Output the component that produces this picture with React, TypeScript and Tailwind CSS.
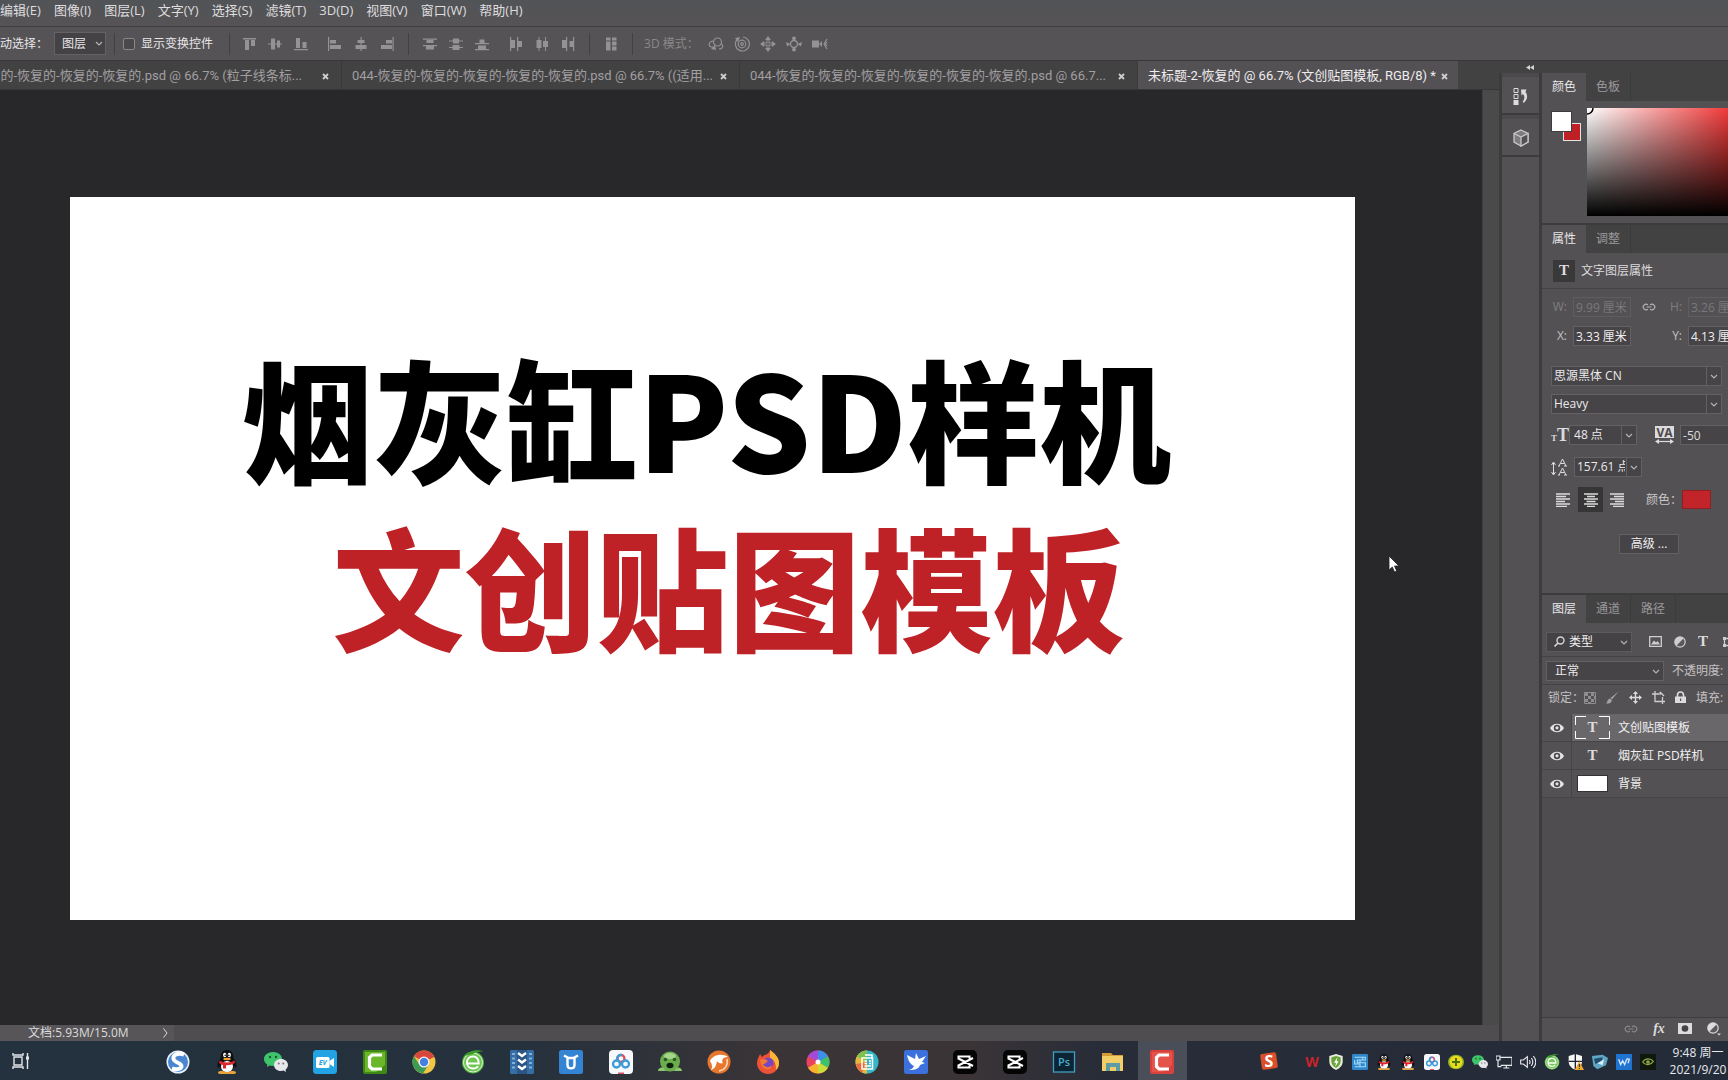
import { FC, ReactNode } from 'react';

const menus = ['编辑(E)', '图像(I)', '图层(L)', '文字(Y)', '选择(S)', '滤镜(T)', '3D(D)', '视图(V)', '窗口(W)', '帮助(H)'];

const docTabs = [
  { title: '复的-恢复的-恢复的-恢复的.psd @ 66.7% (粒子线条标...', cut: true },
  { title: '044-恢复的-恢复的-恢复的-恢复的-恢复的.psd @ 66.7% ((适用...', cut: false },
  { title: '044-恢复的-恢复的-恢复的-恢复的-恢复的-恢复的.psd @ 66.7...', cut: false },
];

const Chevron: FC<{ className?: string }> = ({ className = '' }) => (
  <svg viewBox="0 0 8 5" className={`w-2 h-[5px] pointer-events-none fill-none stroke-[#b5b3b5] ${className}`}>
    <path d="M1 1l3 3 3-3" strokeWidth="1.2" />
  </svg>
);

const Close: FC = () => (
  <svg viewBox="0 0 7 7" className="w-[7px] h-[7px] stroke-[#cfcdcf]">
    <path d="M1 1l5 5M6 1L1 6" strokeWidth="1.8" />
  </svg>
);

/* options bar */

const Tool: FC<{ label: string; children: ReactNode }> = ({ label, children }) => (
  <button aria-label={label} className="w-[26px] h-6 flex items-center justify-center">
    <svg viewBox="0 0 16 16" className="w-4 h-4 fill-[#949294] stroke-[#949294]" strokeWidth="0">{children}</svg>
  </button>
);

const Divider: FC = () => <span className="w-px h-[22px] bg-[#434143]" />;

const AlignTools: FC = () => (
  <>
    <div className="flex ml-1.5">
      <Tool label="顶对齐"><path d="M2 2h13v1.5H2zM4 4h4v10H4zM10 4h4v6h-4z" /></Tool>
      <Tool label="垂直居中对齐"><path d="M1 7.5h14v1H1zM4 2.5h4v11H4zM10 4.5h3v7h-3z" /></Tool>
      <Tool label="底对齐"><path d="M1 13h14v1.3H1zM3 2h4v10H3zM9.500 6h4v6h-4z" /></Tool>
    </div>
    <div className="flex ml-2">
      <Tool label="左对齐"><path d="M1 1h1.200v14H1zM3 4h6v3.500H3zM3 9h11v4H3z" /></Tool>
      <Tool label="水平居中对齐"><path d="M7.500 1h1.200v14H7.500zM4.500 4h7v3H4.500zM2.500 9h11v4h-11z" /></Tool>
      <Tool label="右对齐"><path d="M13.500 1h1.200v14h-1.200zM7 4h6v3.500H7zM2 9h11v4H2z" /></Tool>
    </div>
    <div className="ml-2 flex items-center"><Divider /></div>
    <div className="flex ml-2">
      <Tool label="按顶分布"><path d="M1 2.500h14v1.200H1zM4.500 4h7v3h-7zM1 9h14v1.200H1zM4 10h8v3.500H4z" /></Tool>
      <Tool label="垂直居中分布"><path d="M1 4.500h14v1H1zM5 2.500h6v5H5zM1 11h14v1H1zM4.500 9h7v5h-7z" /></Tool>
      <Tool label="按底分布"><path d="M1 7h14v1.200H1zM5.500 3.500h5V7h-5zM1 13h14v1.200H1zM4 9.500h8V13H4z" /></Tool>
    </div>
    <div className="flex ml-2">
      <Tool label="按左分布"><path d="M2 1h1.200v14H2zM3 4h4v8H3zM9 1h1.200v14H9zM10 5h4v6h-4z" /></Tool>
      <Tool label="水平居中分布"><path d="M4.500 1h1v14h-1zM2.500 4h5v8h-5zM11 1h1v14h-1zM9 5h5v6H9z" /></Tool>
      <Tool label="按右分布"><path d="M6 1h1.200v14H6zM2 4h4v8H2zM13 1h1.200v14H13zM9.500 5H13v6H9.500z" /></Tool>
    </div>
    <div className="ml-2 flex items-center"><Divider /></div>
    <div className="ml-2">
      <Tool label="自动对齐图层"><path d="M3 1.500h4.500v3H3zM3 5.500h4.500v9H3zM9 1.500h4.500v3H9zM9 5.500h4.500v4H9zM9 10.500h4.500v4H9z" /></Tool>
    </div>
    <div className="ml-2 flex items-center"><Divider /></div>
    <span className="ml-[11px] w-[59px] text-[#8a888a] whitespace-nowrap">3D 模式：</span>
    <div className="flex">
      <Tool label="旋转 3D 对象">
        <g fill="none" strokeWidth="1.200"><circle cx="9.500" cy="6" r="4" /><path d="M5 5C0 6 0 11 5 11M13 8c3 1 2 5-2 5" /></g>
        <path d="M3 13l4-4 1 5z" />
      </Tool>
      <Tool label="滚动 3D 对象">
        <g fill="none" strokeWidth="1.200"><path d="M3 3.500A7 7 0 1 0 9 1" /><circle cx="8" cy="8" r="3.800" /><circle cx="8" cy="8" r="1.300" /></g>
        <path d="M1 2l5-1-2 5z" />
      </Tool>
      <Tool label="拖动 3D 对象">
        <path d="M8 0l3 4H5zM8 16l3-4H5zM0 8l4-3v6zM16 8l-4-3v6z" />
        <path d="M8 3v10M3 8h10" strokeWidth="3" /><path d="M8 4v8M4 8h8" stroke="#555355" strokeWidth="1" />
      </Tool>
      <Tool label="滑动 3D 对象">
        <circle cx="8" cy="8" r="3.500" fill="none" strokeWidth="1.400" />
        <path d="M8 0l2.500 3h-5zM8 16l2.500-3h-5zM0 6l4.500 2L1 10.500zM16 6l-4.500 2 3.500 2.500z" />
        <path d="M6.500 1h3v3h-3zM6.500 12h3v3h-3z" />
      </Tool>
      <Tool label="缩放 3D 对象">
        <path d="M0 4.500h7v7H0zM7 8l3-3v6z" />
        <path d="M15 3l-3 5 3 5M15 6l-1.500 2L15 10" fill="none" strokeWidth="1.200" />
      </Tool>
    </div>
  </>
);

/* panels */

const PanelTabs: FC<{ tabs: string[] }> = ({ tabs }) => (
  <div role="tablist" className="flex h-7 bg-[#434243] shrink-0">
    {tabs.map((t, i) => (
      <button
        key={t}
        role="tab"
        aria-selected={i === 0}
        className={i === 0 ? 'w-11 bg-[#535153] text-[#e8e6e8]' : 'w-[45px] border-r border-[#3c3b3c] text-[#9a989a]'}
      >
        {t}
      </button>
    ))}
  </div>
);

const Field: FC<{ label: string; value: string; dim?: boolean; className?: string }> = ({ label, value, dim, className = '' }) => (
  <label className={`flex items-center shrink-0 ${dim ? 'text-[#807e80]' : 'text-[#c4c2c4]'} ${className}`}>
    <span className="w-[21px] text-right mr-1.5">{label}</span>
    <input
      defaultValue={value}
      disabled={dim}
      className={`w-[58px] h-5 px-0.5 border text-[12px] ${dim ? 'border-[#5f5d5f] bg-transparent text-[#7a787a]' : 'border-[#636163] bg-[#464446] text-[#f0eef0]'}`}
    />
  </label>
);

const Select: FC<{ label: string; value: string; className: string; split?: boolean }> = ({ label, value, className, split }) => (
  <div className={`relative h-5 shrink-0 ${className}`}>
    <select aria-label={label} className="appearance-none w-full h-full bg-[#464446] border border-[#636163] pl-0.5 pr-4 text-[#ebe9eb]">
      <option>{value}</option>
    </select>
    {split && <span className="absolute right-[15px] top-0 w-px h-full bg-[#636163]" />}
    <Chevron className="absolute right-1 top-2" />
  </div>
);

const TextLines: FC<{ d: string }> = ({ d }) => (
  <svg viewBox="0 0 14 14" className="w-3.5 h-3.5 stroke-[#dddbdd]"><path d={d} strokeWidth="1.300" /></svg>
);

const Serif: FC<{ className?: string }> = ({ className = '' }) => (
  <span className={`font-['Liberation_Serif',serif] font-bold leading-none text-[#dddbdd] ${className}`}>T</span>
);

const Eye: FC = () => (
  <svg viewBox="0 0 14 10" className="w-3.5 h-2.5">
    <path d="M0 5C3-.8 11-.8 14 5 11 10.800 3 10.800 0 5z" fill="#e4e2e4" />
    <circle cx="7" cy="5" r="3.200" fill="#4a484a" /><circle cx="7" cy="4.800" r="1.600" fill="#e4e2e4" />
  </svg>
);

const Chain: FC<{ className?: string }> = ({ className = '' }) => (
  <svg viewBox="0 0 14 8" className={`w-3.5 h-2 fill-none ${className}`}>
    <path d="M6 6.200A3 2.700 0 1 1 6 1.800M8 6.200A3 2.700 0 1 0 8 1.800M4.500 4h5" strokeWidth="1.200" />
  </svg>
);

const ColorPanel: FC = () => (
  <section aria-label="颜色">
    <PanelTabs tabs={['颜色', '色板']} />
    <div className="flex h-[122px] pt-[7px] bg-[#535153]">
      <div className="w-[45px] pl-[9px] pt-[3px]">
        <div className="relative w-[30px] h-[30px]">
          <span className="absolute right-0 bottom-0 w-[18px] h-[18px] border border-[#e5e5e5] bg-[#be2026]" />
          <span className="absolute left-0 top-0 w-[21px] h-[21px] border border-[#3d3d3d] bg-white" />
        </div>
      </div>
      <div className="flex-1 h-[108px] bg-[linear-gradient(to_top,#000,transparent),linear-gradient(to_right,#fff,#f23a3a)]">
        <svg viewBox="0 0 8 8" className="w-2 h-2 fill-none stroke-black"><path d="M6 0A6 6 0 0 1 0 6" strokeWidth="1.500" /></svg>
      </div>
    </div>
  </section>
);

const PropertiesPanel: FC = () => (
  <section aria-label="属性" className="border-t-2 border-[#3d3c3d] bg-[#535153]">
    <PanelTabs tabs={['属性', '调整']} />
    <div className="flex items-center h-9 pl-[11px] border-b border-[#434243]">
      <span className="w-[22px] h-[22px] flex items-center justify-center bg-[#3a393a]"><Serif className="text-[15px]" /></span>
      <h2 className="ml-1.5 text-[#dddbdd]">文字图层属性</h2>
    </div>
    <div className="pt-2 h-[304px] pl-[9px]">
      <div className="flex items-center -ml-[5px]">
        <Field label="W:" value="9.99 厘米" dim />
        <Chain className="ml-[11px] mr-3 shrink-0 stroke-[#b5b3b5]" />
        <Field label="H:" value="3.26 厘米" dim className="-ml-[7px]" />
      </div>
      <div className="flex items-center -ml-[5px] mt-[9px]">
        <Field label="X:" value="3.33 厘米" />
        <Field label="Y:" value="4.13 厘米" className="ml-[30px]" />
      </div>
      <Select label="字体" value="思源黑体 CN" split className="mt-5 w-[171px]" />
      <Select label="字重" value="Heavy" split className="mt-2 w-[171px]" />
      <div className="flex items-center mt-[11px]">
        <span className="w-[23px] flex items-baseline"><Serif className="text-[9px]" /><Serif className="text-[18px]" /></span>
        <Select label="字号" value="48 点" split className="w-[68px] [&>select]:pl-1" />
        <svg viewBox="0 0 19 18" className="w-[19px] h-[18px] ml-[18px] mr-1.5 shrink-0">
          <path d="M0 0h19v12H0z" fill="#dddbdd" />
          <text x="9.500" y="10.500" textAnchor="middle" fontSize="12" fontWeight="bold" fontFamily="Open Sans, sans-serif" fill="#4a484a">VA</text>
          <path d="M2 15.500h15" stroke="#dddbdd" strokeWidth="1.200" /><path d="M0 15.500l4-2.500v5zM19 15.500L15 13v5z" fill="#dddbdd" />
        </svg>
        <input aria-label="字距" defaultValue="-50" className="w-14 h-5 px-0.5 shrink-0 border border-[#636163] bg-[#464446] text-[#dddbdd]" />
      </div>
      <div className="flex items-center mt-3">
        <svg viewBox="0 0 17 18" className="w-[17px] h-[18px] mr-1.5 fill-none stroke-[#dddbdd]">
          <path d="M2.500 5v11M.5 7l2-3 2 3M.5 14l2 3 2-3" />
          <path d="M7 8h2M13 8h3M8 8l3.500-7L15 8M9.500 5.500h4M7 17h2M13 17h3M8 17l3.500-7 3.500 7M9.500 14.500h4" />
        </svg>
        <Select label="行距" value="157.61 点" split className="w-[68px]" />
      </div>
      <div className="flex items-center mt-2.5 text-[#c9c7c9]">
        <button aria-label="左对齐文本" className="w-[27px] h-[25px] flex items-center pl-[5px]">
          <TextLines d="M0 1h14M0 3.500h10M0 6h14M0 8.500h9M0 11h14M0 13.500h11" />
        </button>
        <button aria-label="居中对齐文本" className="w-[25px] h-[25px] flex items-center justify-center bg-[#373637]">
          <TextLines d="M0 1h14M3 3.500h8M0 6h14M2.500 8.500h9M0 11h14M3 13.500h8" />
        </button>
        <button aria-label="右对齐文本" className="w-[27px] h-[25px] flex items-center justify-center">
          <TextLines d="M0 1h14M4 3.500h10M0 6h14M5 8.500h9M0 11h14M3 13.500h11" />
        </button>
        <span className="ml-4 w-9 whitespace-nowrap">颜色：</span>
        <button aria-label="文本颜色" className="w-[29px] h-[19px] bg-[#c12529] border border-[#8e2023]" />
      </div>
      <button className="block ml-[68px] mt-[22px] w-[60px] h-5 border border-[#636163] bg-[#464446] text-[#f0eef0]">高级 ...</button>
    </div>
  </section>
);

const LayerRow: FC<{ name: string; selected?: boolean; thumb: ReactNode }> = ({ name, selected, thumb }) => (
  <li className="flex h-7 border-b border-[#464546]">
    <button aria-label="显示图层" className="w-[30px] flex items-center justify-center border-r border-[#464546]"><Eye /></button>
    <div className={`flex-1 flex items-center pl-[3px] whitespace-nowrap text-[#f2f0f2] ${selected ? 'bg-[#696769]' : ''}`}>
      <span className="w-[35px] h-[23px] mr-2 flex items-center justify-center">{thumb}</span>
      {name}
    </div>
  </li>
);

const LayersPanel: FC = () => (
  <section aria-label="图层" className="flex-1 flex flex-col border-t-2 border-[#3d3c3d] bg-[#535153]">
    <PanelTabs tabs={['图层', '通道', '路径']} />
    <div className="flex items-center h-[34px] pt-1 pl-1 border-b border-[#454345]">
      <div className="relative w-[86px] h-5 shrink-0">
        <select aria-label="筛选类型" className="appearance-none w-full h-full bg-[#444244] border border-[#5c5a5c] pl-[22px] text-[#f0eef0]"><option>类型</option></select>
        <svg viewBox="0 0 11 11" className="absolute left-2 top-1 w-[11px] h-[11px] fill-none stroke-[#d5d3d5]"><circle cx="6.500" cy="4.500" r="3.500" strokeWidth="1.400" /><path d="M4 7L.5 10.500" strokeWidth="1.600" /></svg>
        <Chevron className="absolute right-1 top-2" />
      </div>
      <div className="flex items-center gap-3 ml-[17px] shrink-0">
        <svg viewBox="0 0 13 11" className="w-[13px] h-[11px]"><path d="M.7.700h11.600v9.600H.7z" fill="none" stroke="#cfcdcf" strokeWidth="1.300" /><path d="M2 8.500l3-4 2 2 1.500-1.500L11 8.500z" fill="#cfcdcf" /></svg>
        <svg viewBox="0 0 12 12" className="w-3 h-3"><circle cx="6" cy="6" r="5.200" fill="#5b595b" stroke="#cfcdcf" strokeWidth="1.200" /><path d="M9.700 2.300A5.200 5.200 0 0 0 2.300 9.700z" fill="#cfcdcf" /></svg>
        <Serif className="w-3 text-[15px]" />
        <svg viewBox="0 0 12 12" className="w-3 h-3 fill-none stroke-[#cfcdcf]"><path d="M2.500 2v8M3 2.500h8M3 9.500h8" strokeWidth="1.300" /><path d="M1 1h3v3H1zM1 8h3v3H1z" fill="#cfcdcf" strokeWidth="0" /></svg>
      </div>
    </div>
    <div className="flex items-center h-7 pl-1 border-b border-[#454345] text-[#c4c2c4]">
      <Select label="混合模式" value="正常" className="w-[118px] [&>select]:pl-2" />
      <span className="ml-2 whitespace-nowrap">不透明度:</span>
    </div>
    <div className="flex items-center h-[29px] pb-1 pl-1.5 text-[#c4c2c4] whitespace-nowrap">
      <span className="w-9">锁定：</span>
      <div className="flex items-center gap-[10px]">
        <svg viewBox="0 0 12 12" className="w-3 h-3"><path d="M.5.500h11v11H.5z" fill="none" stroke="#8f8d8f" /><path d="M1 1h3v3H1zM7 1h3v3H7zM4 4h3v3H4zM1 7h3v3H1zM7 7h3v3H7zM10 4h1v3h-1zM4 10h3v1H4z" fill="#8f8d8f" /></svg>
        <svg viewBox="0 0 13 13" className="w-[13px] h-[13px] fill-[#a3a1a3]"><path d="M12.500.5L6 8.500 4.500 7zM4 7.500L6 9.500C5 13 2 12.500 0 12.500c1.500-1 1-4 4-5z" /></svg>
        <svg viewBox="0 0 13 13" className="w-[13px] h-[13px] fill-[#dddbdd] stroke-[#dddbdd]"><path d="M6.500 2v9M2 6.500h9" strokeWidth="1.400" /><path d="M6.500 0L9 3H4zM6.500 13L9 10H4zM0 6.500L3 4v5zM13 6.500L10 4v5z" strokeWidth="0" /></svg>
        <svg viewBox="0 0 13 13" className="w-[13px] h-[13px] fill-none stroke-[#cfcdcf]"><path d="M3 0v10.500h10M0 3h7M10.500 13V6M8 1l4 4M8 4V1" strokeWidth="1.300" /></svg>
        <svg viewBox="0 0 11 13" className="w-[11px] h-[13px]"><path d="M2.500 6V4a3 3 0 0 1 6 0v2" fill="none" stroke="#dddbdd" strokeWidth="1.600" /><path d="M0 5.500h11V12H0z" fill="#dddbdd" /><path d="M5 7.500h1.200v2.500H5z" fill="#535153" /></svg>
        <span>填充:</span>
      </div>
    </div>
    <ul>
      <LayerRow
        name="文创贴图模板"
        selected
        thumb={
          <span className="relative w-full h-full flex items-center justify-center">
            <svg viewBox="0 0 35 23" className="absolute inset-0 w-[35px] h-[23px] fill-none stroke-white"><path d="M.5 9V.5H11M24 .5h10.500V9M.5 15v7.500H11M24 22.500h10.500V15" /></svg>
            <Serif className="text-[15px]" />
          </span>
        }
      />
      <LayerRow name="烟灰缸 PSD样机" thumb={<Serif className="text-[15px]" />} />
      <LayerRow name="背景" thumb={<span className="w-[31px] h-[17px] bg-white border border-[#333]" />} />
    </ul>
    <div className="flex-1 bg-[#4f4d4f]" />
    <div className="flex items-center h-6 border-t border-[#3f3e3f] pb-0.5 pl-[82px] text-[#dddbdd]">
      <Chain className="stroke-[#8a888a] shrink-0" />
      <button className="ml-3 w-[18px] font-['Liberation_Serif',serif] italic font-bold text-[14px] leading-none">fx</button>
      <svg viewBox="0 0 14 11" className="w-3.5 h-[11px] ml-2.5 shrink-0"><path d="M0 0h14v11H0z" fill="#dddbdd" /><circle cx="7" cy="5.500" r="3.300" fill="#454345" /></svg>
      <svg viewBox="0 0 14 14" className="w-3.5 h-3.5 ml-[15px] shrink-0"><circle cx="6" cy="6" r="5.200" fill="#5b595b" stroke="#dddbdd" strokeWidth="1.200" /><path d="M9.700 2.300A5.200 5.200 0 0 0 2.300 9.700z" fill="#dddbdd" /><path d="M10 11.500h4l-2 2z" fill="#dddbdd" /></svg>
    </div>
  </section>
);

/* taskbar */

const Qq: FC = () => (
  <>
    <ellipse cx="8" cy="22.500" rx="5" ry="1.800" fill="#e8a33a" /><ellipse cx="16" cy="22.500" rx="5" ry="1.800" fill="#e8a33a" />
    <path d="M12 0C7.500 0 5.500 3.500 5.500 8 3.500 11 2 14 2.500 17c.5 1.500 1.500 0 2.300-1 1 8 13.400 8 14.400 0 .8 1 1.800 2.500 2.300 1 .5-3-1-6-3-9C18.500 3.500 16.500 0 12 0z" fill="#101014" />
    <ellipse cx="12" cy="16.500" rx="6" ry="5.500" fill="#fff" />
    <path d="M4.500 10.500c4 2.500 11 2.500 15 0l.5 2.500c-3 2-6 2.300-9 2.200v3.300H8v-3.600c-1.500-.4-3-1-4-1.900z" fill="#d8262c" />
    <ellipse cx="9.700" cy="5" rx="1.600" ry="2.300" fill="#fff" /><ellipse cx="14.300" cy="5" rx="1.600" ry="2.300" fill="#fff" />
    <circle cx="10.200" cy="5.300" r=".8" /><circle cx="13.800" cy="5.300" r=".8" />
    <ellipse cx="12" cy="9" rx="3.800" ry="1.200" fill="#f0a22e" />
  </>
);

const WeChat: FC = () => (
  <>
    <path d="M9 2C4 2 0 5 0 9c0 2.300 1.300 4.300 3.300 5.500L2.800 17l2.900-1.500c1 .3 2.200.5 3.300.5 5 0 9-3 9-7s-4-7-9-7z" fill="#3ec46a" />
    <circle cx="6" cy="7" r="1.200" fill="#1d5a34" /><circle cx="12" cy="7" r="1.200" fill="#1d5a34" />
    <path d="M17 9c-4 0-7 2.600-7 6s3 6 7 6c.9 0 1.700-.1 2.500-.4L22 22l-.5-2.300C23 18.500 24 16.900 24 15c0-3.400-3-6-7-6z" fill="#e6e7ea" />
    <circle cx="14.700" cy="13.500" r="1" fill="#777" /><circle cx="19.300" cy="13.500" r="1" fill="#777" />
  </>
);

const Netdisk: FC = () => (
  <>
    <rect width="24" height="24" rx="4" fill="#f6f8fb" />
    <g fill="none" strokeWidth="2.300"><circle cx="12" cy="8.500" r="3.500" stroke="#d65163" /><circle cx="7.500" cy="14" r="3.500" stroke="#3d9bd8" /><circle cx="16.500" cy="14" r="3.500" stroke="#3d9bd8" /><path d="M9 10.500a3.500 3.500 0 0 1 4-5.400" stroke="#3d9bd8" /></g>
    <path d="M9 22.500h6V24H9z" fill="#d65163" />
  </>
);

const GreenE: FC = () => (
  <>
    <circle cx="12" cy="12.500" r="11" fill="#4fae3a" /><circle cx="12" cy="12.500" r="9.500" fill="#6fc653" stroke="#e4f5de" strokeWidth="1" />
    <path d="M6.500 13.500h11.200C18 9 15.500 6.500 12 6.500c-3.500 0-6 2.500-6 6s2.500 6 6 6c2.300 0 4-.8 5-2.300" fill="none" stroke="#fff" strokeWidth="2" />
    <path d="M3 6C8 0 19-1 23 2c-3-1-8 0-11 2z" fill="#3c9a2d" />
  </>
);

const CapCut: FC = () => (
  <>
    <rect width="24" height="24" rx="5" fill="#050505" />
    <path d="M20 8L5.500 15.500v2H16.500v-2M20 16L5.500 8.500v-2H16.500v2" fill="none" stroke="#fff" strokeWidth="2.100" />
  </>
);

const Camtasia: FC<{ fill: string; edge: string }> = ({ fill, edge }) => (
  <>
    <rect width="24" height="24" rx="2" fill={edge} /><path d="M2 2h20v13L13 22H2z" fill={fill} />
    <path d="M19 5H9L6.500 7.500v9L9 19h10" fill="none" stroke="#fff" strokeWidth="3.200" />
  </>
);

const apps: { name: string; art: ReactNode }[] = [
  { name: '搜狗浏览器', art: <><circle cx="12" cy="12" r="11.500" fill="#e9f1fb" /><circle cx="12" cy="12" r="10" fill="#4a86d0" /><path d="M18 4.500C11 2 5.500 6 8 10c2 3 8 3 7.500 6.500-.4 2.500-5 3.500-9.500 2" fill="none" stroke="#fff" strokeWidth="4" /></> },
  { name: 'QQ', art: <Qq /> },
  { name: '微信', art: <WeChat /> },
  { name: 'EV录屏', art: <><rect width="24" height="24" rx="3.500" fill="#22a4e4" /><rect x="3" y="7" width="13.500" height="11" rx="1.500" fill="#fff" /><path d="M16.500 11l4.500-3v9l-4.500-3z" fill="#fff" /><text x="9.700" y="15" fontSize="7" fontWeight="bold" fontStyle="italic" textAnchor="middle" fontFamily="Open Sans, sans-serif" fill="#22a4e4">EV</text></> },
  { name: 'Camtasia', art: <Camtasia fill="#6ab82a" edge="#3f8a17" /> },
  { name: 'Chrome', art: <><circle cx="12" cy="12" r="11.500" fill="#f3c544" /><path d="M12 12L2 6.200A11.500 11.500 0 0 1 22 6.200L22 7z" fill="#d9473b" /><path d="M2 6.200A11.500 11.500 0 0 0 11 23.500L17 14 7 14z" fill="#3f9b54" /><circle cx="12" cy="12" r="5.500" fill="#f4f4f4" /><circle cx="12" cy="12" r="4.200" fill="#4580e0" /></> },
  { name: '360浏览器', art: <GreenE /> },
  { name: '下载', art: <><rect width="24" height="24" rx="1.500" fill="#356ea6" /><path d="M7 0h10v24H7z" fill="#2b5585" /><path d="M2 4h3M2 8.500h3M2 13h3M2 17.500h3M19 4h3M19 8.500h3M19 13h3M19 17.500h3" stroke="#7fb0dc" strokeWidth="1.800" /><path d="M8 3l4 3 4-3M8 9.500l4 3 4-3M8 16l4 3 4-3" fill="none" stroke="#fff" strokeWidth="2.400" /></> },
  { name: '优图', art: <><rect width="24" height="24" rx="2.500" fill="#3385d4" /><path d="M5 5.500l3.500 2v7.500c0 4.500 7 4.500 7 0V7.500l3.500-2M8.500 8h7" fill="none" stroke="#fff" strokeWidth="2.400" /></> },
  { name: '百度网盘', art: <Netdisk /> },
  { name: '青蛙', art: <><circle cx="12" cy="11.500" r="10" fill="#6cae4e" /><ellipse cx="12" cy="6" rx="6" ry="3" fill="#a5d48b" /><path d="M0 21c0-4 6-5 7-1l2 1H1zM24 21c0-4-6-5-7-1l-2 1h8z" fill="#8cc66f" /><circle cx="7.500" cy="9.500" r="1.800" fill="#2b5c22" /><circle cx="16.500" cy="9.500" r="1.800" fill="#2b5c22" /><ellipse cx="12" cy="15.500" rx="3.500" ry="2.800" fill="#0e200b" /></> },
  { name: 'UC浏览器', art: <><circle cx="12" cy="12" r="11.500" fill="#e8762d" /><path d="M3 11C6 4 16 3 21 7c-5 0-7 3-5 6-2 1-5 0-6-2-1 6-3 8-6 9 2-3 1-6-1-9z" fill="#fff" /><path d="M20 9c1.500 6-2 11-8 12" fill="none" stroke="#ffd7b5" strokeWidth="1.500" /></> },
  { name: 'Firefox', art: <><path d="M14 0c4 3 9 7 9 13a11 11 0 0 1-22 0c0-4 2-6 3-9 1 1 1 2 2 3 3-3 7-2 8-7z" fill="#ee5236" /><path d="M14 0c4 3 9 7 9 13 0 3-1 5-3 7 0-6-1-10-6-12z" fill="#f9b73a" /><circle cx="12" cy="13" r="5.500" fill="#7646c4" /><path d="M4 10c3-2 6-1 8 1-2 1-2 3-5 3 2 4 7 4 9 1 0 6-10 7-12-5z" fill="#f2792f" /></> },
  { name: '看图', art: <><circle cx="12" cy="12" r="11.500" fill="#e9435e" /><path d="M12 12L12 .5A11.500 11.500 0 0 1 22 6.300z" fill="#3b8fe8" /><path d="M12 12L22 6.300A11.500 11.500 0 0 1 22 17.800z" fill="#39c46c" /><path d="M12 12L22 17.800A11.500 11.500 0 0 1 12 23.500z" fill="#c9de38" /><path d="M12 12v11.500A11.500 11.500 0 0 1 2 17.800z" fill="#f7b22e" /><path d="M12 12L2 6.300A11.500 11.500 0 0 1 12 .5z" fill="#a44ad8" /><circle cx="12" cy="12" r="2.500" fill="#fff" /></> },
  { name: '文件管理', art: <><circle cx="12" cy="12" r="11.500" fill="#34b6c9" /><path d="M12 .5A11.500 11.500 0 0 0 12 23.500z" fill="#e9b63c" /><path d="M2 6.500A11.500 11.500 0 0 1 12 .5v11.500z" fill="#7cc24c" /><path d="M1 14a11.500 11.500 0 0 0 6 8.500L12 12z" fill="#ec6b3d" /><path d="M7 8h10.500v11H7zM10 5h7v3M9.500 11h2.500M14 11h2M9.500 13.500h2.500M14 13.500h2M9.500 16h6.500" fill="none" stroke="#fff" strokeWidth="1.500" /></> },
  { name: '迅雷', art: <><rect width="24" height="24" rx="2.500" fill="#3c70dd" /><path d="M3 5l8 4 1-6 3 6 7-3-4 6 3 1-5 2c-1 4-5 5-11 5 3-1 4-2 5-4-4-2-6-6-7-11z" fill="#fff" /></> },
  { name: '剪映', art: <CapCut /> },
  { name: '剪映专业版', art: <CapCut /> },
  { name: 'Photoshop', art: <><rect x="1.500" y="2" width="21" height="20" fill="#0c2433" stroke="#3f9fc4" strokeWidth="1.300" /><text x="12" y="16" fontSize="11" fontWeight="600" textAnchor="middle" fontFamily="Open Sans, sans-serif" fill="#49add2">Ps</text></> },
  { name: '文件资源管理器', art: <><path d="M1 3h9l2 2h10v4H1z" fill="#d59b35" /><path d="M1 6h21v15H1z" fill="#f3ce66" /><path d="M5 13h14v8h-4v-4H9v4H5z" fill="#5d9ba5" /></> },
  { name: 'Camtasia 录制', art: <Camtasia fill="#e5524a" edge="#d8403c" /> },
];

const tray: { name: string; art: ReactNode }[] = [
  { name: 'WPS', art: <text x="12" y="20" fontSize="21" fontWeight="bold" textAnchor="middle" fontFamily="Open Sans, sans-serif" fill="#c8242b">W</text> },
  { name: '安全卫士', art: <><path d="M12 0l10 3v8c0 7-5 11-10 13C7 22 2 18 2 11V3z" fill="#e9efdc" /><path d="M12 3l7 2v6c0 5-3 8-7 10-4-2-7-5-7-10V5z" fill="#69a33a" /><path d="M14 5l-5 8h3l-1 6 5-8h-3z" fill="#fff" /></> },
  { name: '显卡设置', art: <><rect width="24" height="24" rx="2" fill="#2f88c9" /><path d="M4 5h16v4H8v4h12v6H4M12 9v4M4 9v6h8v4M16 5v4" fill="none" stroke="#a9dcf7" strokeWidth="1.600" /></> },
  { name: 'QQ 1', art: <Qq /> },
  { name: 'QQ 2', art: <Qq /> },
  { name: '网盘', art: <Netdisk /> },
  { name: '加速球', art: <><ellipse cx="12" cy="12" rx="12" ry="11" fill="#8db823" /><circle cx="12" cy="12" r="9.500" fill="#f0d91d" /><path d="M12 6v12M6 12h12" stroke="#46750f" strokeWidth="3" /></> },
  { name: '微信', art: <WeChat /> },
  { name: '网络', art: <path d="M7 5h17v12H7M11 21h9M15.500 17v4M0 3h6v6H0zM3 9v10h5" fill="none" stroke="#e7e9ec" strokeWidth="1.800" /> },
  { name: '音量', art: <path d="M1 9v6h4l6 5V4L5 9zM14 9c1.500 2 1.500 4 0 6M17 6c3 4 3 8 0 12M20 3c5 6 5 12 0 18" fill="none" stroke="#e7e9ec" strokeWidth="1.700" /> },
  { name: '浏览器', art: <GreenE /> },
  { name: '安全中心', art: <><path d="M11 0l10 3v8c0 7-5 11-10 13C6 22 1 18 1 11V3z" fill="#f7f7f7" /><path d="M11 0v24M1 11h20" stroke="#20242e" strokeWidth="2" /><path d="M17 11l7 13H10z" fill="#f0a92e" /><path d="M17 15v4.500M17 21v1.500" stroke="#222" strokeWidth="1.600" /></> },
  { name: '硬件管理', art: <><path d="M0 3l16-2 8 5-3 11-13 6-6-5z" fill="#5fa6c4" /><path d="M3 7l13-2-1 6-10 4z" fill="#1f4f6c" /><path d="M8 14l10-6-2 9z" fill="#d7eef7" /></> },
  { name: 'WiFi', art: <><rect width="24" height="24" fill="#1f74d0" /><path d="M4 8l3 8 3-6 3 6 3-8M16 7l4 1-2 6" fill="none" stroke="#d3e8ff" strokeWidth="2" /></> },
  { name: 'NVIDIA', art: <><rect width="24" height="24" fill="#10180b" /><path d="M4 12c4-6 12-6 16-1-4 6-12 7-16 1z" fill="none" stroke="#8aa84a" strokeWidth="1.800" /><circle cx="12" cy="12" r="2.800" fill="#8aa84a" /></> },
];

const Taskbar: FC = () => (
  <footer className="flex h-[39px] shrink-0 overflow-hidden bg-[linear-gradient(to_right,#23323e_0%,#25313d_30%,#3a3437_45%,#3a3437_56%,#272c38_64%,#242c39_100%)]">
    <button aria-label="任务视图" className="w-[153px] pl-3">
      <svg viewBox="0 0 18 16" className="w-[18px] h-4 fill-none stroke-[#e3e6e9]"><path d="M1 0v2h10V0M2 4h8v8H2zM1 16v-2h10v2M15.500 0v16" strokeWidth="1.400" /><path d="M14 3.500h3v3h-3z" fill="#e3e6e9" strokeWidth="0" /></svg>
    </button>
    <nav aria-label="任务栏" className="flex w-[1034px]">
      {apps.map((a, i) => (
        <button key={a.name} aria-label={a.name} className={`flex-1 flex items-center justify-center pt-0.5 ${i === apps.length - 1 ? 'bg-[#4a4e58]' : ''}`}>
          <svg viewBox="0 0 24 24" className="w-6 h-6">{a.art}</svg>
        </button>
      ))}
    </nav>
    <div className="flex ml-auto items-center">
      <button aria-label="搜狗输入法" className="mr-[22px]">
        <svg viewBox="0 0 18 18" className="w-[18px] h-[18px]"><rect x="1" y="1" width="16" height="16" rx="2" fill="#d9502b" transform="rotate(-8 9 9)" /><text x="9" y="15" fontSize="16" fontWeight="bold" textAnchor="middle" fontFamily="Open Sans, sans-serif" fill="#fff">S</text></svg>
      </button>
      {tray.map((t) => (
        <button key={t.name} aria-label={t.name} className="w-6 h-full flex items-center justify-center pt-0.5">
          <svg viewBox="0 0 24 24" className="w-4 h-4">{t.art}</svg>
        </button>
      ))}
      <time className="ml-2 w-[60px] text-center text-[12px] leading-[17px] text-[#e6e9ed] whitespace-nowrap pt-px">9:48 周一<br />2021/9/20</time>
    </div>
  </footer>
);

const App: FC = () => {
  return (
    <div className="flex flex-col h-screen overflow-hidden bg-[#535153] text-[12px] font-['Open_Sans','Noto_Sans_CJK_SC',sans-serif]">
      <header className="shrink-0">
        <nav className="flex items-center h-[26px] gap-[13px] pb-[5px] bg-linear-to-b from-[#515457] to-[#565355] text-[13px] text-[#dfdddf]">
          {menus.map((m) => (
            <button key={m} className="whitespace-nowrap">{m}</button>
          ))}
        </nav>
        <div className="flex items-center h-[34px] border-t border-[#3f3d3f] bg-[#555355] text-[#e8e6e8]">
          <label htmlFor="auto-select" className="w-[54px] shrink-0 whitespace-nowrap">动选择：</label>
          <div className="relative w-[52px] h-[23px] shrink-0">
            <select id="auto-select" className="appearance-none w-full h-full pl-[7px] bg-[#444244] border border-[#636163]"><option>图层</option></select>
            <Chevron className="absolute right-[3px] top-[9px]" />
          </div>
          <div className="mx-2 flex items-center"><Divider /></div>
          <label className="flex items-center mr-4 whitespace-nowrap">
            <input type="checkbox" className="appearance-none w-3 h-3 mr-1.5 rounded-xs border border-[#8a888a] bg-[#4a484a]" />
            显示变换控件
          </label>
          <Divider />
          <AlignTools />
        </div>
      </header>

      <div className="flex flex-1 min-h-0">
        <main className="flex flex-col flex-1 min-w-0">
          <div role="tablist" className="flex h-[30px] shrink-0 border-y border-[#383738] bg-[#434243] font-['Roboto','Noto_Sans_CJK_SC',sans-serif] text-[13px] text-[#a19fa1]">
            {docTabs.map((t) => (
              <div key={t.title} className={`flex items-center shrink-0 pt-0.5 pr-3 border-r border-[#3a393a] ${t.cut ? 'w-[342px] justify-end gap-5' : 'w-[398px] pl-2.5 justify-between'}`}>
                <button role="tab" className="whitespace-nowrap">{t.title}</button>
                <button aria-label="关闭"><Close /></button>
              </div>
            ))}
            <div className="flex items-center justify-between w-[320px] shrink-0 pt-0.5 px-2.5 bg-[#535153] text-[#efedef]">
              <button role="tab" aria-selected="true" className="whitespace-nowrap">未标题-2-恢复的 @ 66.7% (文创贴图模板, RGB/8) *</button>
              <button aria-label="关闭"><Close /></button>
            </div>
          </div>
          <div className="flex flex-1 min-h-0">
            <div className="relative flex-1 bg-[#28282a]">
              <article className="mt-[107px] ml-[70px] mr-[127px] aspect-video bg-white pt-[135px] text-center font-['Noto_Sans_CJK_SC',sans-serif] font-black text-[132px] leading-[168px] whitespace-nowrap">
                <p className="pr-3 text-black">烟灰缸PSD样机</p>
                <p className="pl-8 text-[#be2126]">文创贴图模板</p>
              </article>
              <svg viewBox="0 0 12 18" className="absolute left-[1388px] top-[465px] w-3 h-[18px]"><path d="M1 1v14l3.300-3 2.200 5 2.200-1-2.200-5H11z" fill="#fff" stroke="#222" strokeWidth=".8" /></svg>
            </div>
            <div className="w-[17px] bg-[#4b4a4b] border-l border-[#3f3e3f]" />
          </div>
          <div className="flex h-4 shrink-0 items-center bg-[#4f4d4f] text-[#dddbdd]">
            <div className="flex items-center justify-between w-[174px] h-full pl-7 pr-1.5 bg-[#575557] leading-4">
              文档:5.93M/15.0M
              <svg viewBox="0 0 5 10" className="w-[5px] h-2.5 fill-none stroke-[#dddbdd]"><path d="M.5.500L4 5 .5 9.500" /></svg>
            </div>
          </div>
        </main>

        <aside className="flex flex-col w-[229px] shrink-0 bg-[#3d3c3d]">
          <div className="flex items-center h-[13px] shrink-0 pl-[27px] bg-[#434243] border-t border-[#383738]">
            <svg viewBox="0 0 8 5" className="w-2 h-[5px] fill-[#d5d3d5]"><path d="M4 0v5L0 2.500zM8 0v5L4 2.500z" /></svg>
          </div>
          <div className="flex flex-1 gap-[3px] pl-[3px] min-h-0">
            <div className="flex flex-col w-[37px] shrink-0 gap-0.5">
              <button aria-label="历史记录" className="h-10 flex items-center justify-center pt-0.5 bg-[#535153] border-t-4 border-[#4b494b]">
                <svg viewBox="0 0 16 17" className="w-4 h-[17px]"><path d="M1 .5h4v4H1zM1 6.500h4v4H1z" fill="none" stroke="#dddbdd" /><path d="M.5 12h5v5h-5z" fill="#dddbdd" /><path d="M8 1.500h5.500L12.500 4c3 4 1.500 8.500-2 11l-.7-1.500c2-2.500 2.200-5 .2-7.500L8.500 7.500z" fill="#dddbdd" /></svg>
              </button>
              <button aria-label="3D" className="h-10 flex items-center justify-center pt-0.5 bg-[#535153] border-t-4 border-[#4b494b]">
                <svg viewBox="0 0 16 18" className="w-4 h-[18px] stroke-[#c9c7c9]"><path d="M8 1l7 3.500v8.500L8 17l-7-4V4.500z" fill="#7e7c7e" strokeWidth="1.300" /><path d="M8 8l7-3.500V13L8 17z" fill="#535153" strokeWidth="1.300" /><path d="M1 4.500L8 8" strokeWidth="1.300" /></svg>
              </button>
              <div className="flex-1 bg-[#535153]" />
            </div>
            <div className="flex flex-col flex-1 min-w-0 overflow-hidden">
              <ColorPanel />
              <PropertiesPanel />
              <LayersPanel />
            </div>
          </div>
        </aside>
      </div>

      <Taskbar />
    </div>
  );
};

export default App;
